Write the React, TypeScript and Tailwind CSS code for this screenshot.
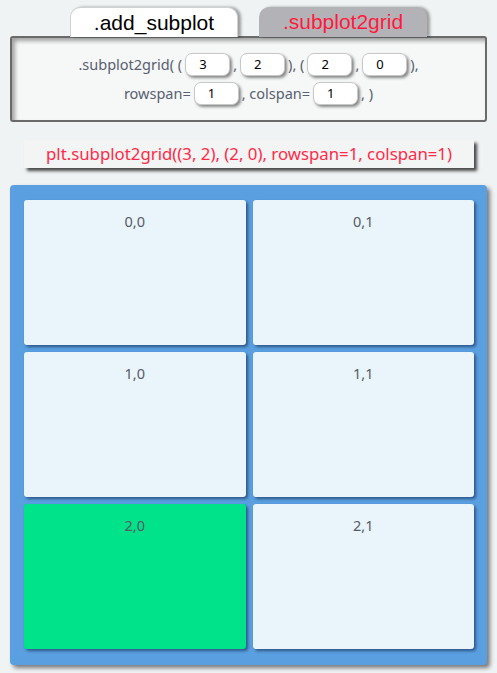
const CELLS = ["0,0", "0,1", "1,0", "1,1", "2,0", "2,1"];

function NumBox({ value }: { value: string }) {
  return (
    <span className="mx-[3px] inline-flex h-[23px] w-[45px] items-center rounded-[7px] border border-[#c8c8c8] bg-white pl-[13px] text-[13px] text-black shadow-[2px_2px_3px_rgba(0,0,0,0.45)]">
      {value}
    </span>
  );
}

export default function App() {
  return (
    <div
      className="min-h-[673px] w-[497px] bg-[#f0f3f4] pt-[7px]"
      style={{ fontFamily: '"Noto Sans", "Open Sans", sans-serif' }}
    >
      <div className="flex justify-center gap-[21px]">
        <div
          className="flex h-[30px] w-[168px] items-center justify-center rounded-t-[10px] border border-b-0 border-[#d0d0d0] bg-white text-[21px] text-black shadow-[3px_0_3px_rgba(0,0,0,0.35)]"
          style={{ fontFamily: '"Liberation Sans", Arial, sans-serif' }}
        >
          .add_subplot
        </div>
        <div
          className="flex h-[30px] w-[168px] items-center justify-center rounded-t-[10px] bg-[#b3b3b7] text-[21px] text-[#ff1a3d] shadow-[3px_0_3px_rgba(0,0,0,0.35)]"
          style={{ fontFamily: '"Liberation Sans", Arial, sans-serif' }}
        >
          .subplot2grid
        </div>
      </div>

      <div className="mx-[10px] -mt-px flex h-[86px] flex-col items-center justify-center gap-[6px] rounded-[3px] border-2 border-[#6a6a6a] bg-[#f6f7f7] text-[14.5px] text-[#566170] shadow-[inset_3px_3px_4px_rgba(0,0,0,0.35)]">
        <div className="flex items-center">
          <span>.subplot2grid( (</span>
          <NumBox value="3" />
          <span>,</span>
          <NumBox value="2" />
          <span>), (</span>
          <NumBox value="2" />
          <span>,</span>
          <NumBox value="0" />
          <span>),</span>
        </div>
        <div className="flex items-center">
          <span>rowspan=</span>
          <NumBox value="1" />
          <span>, colspan=</span>
          <NumBox value="1" />
          <span>, )</span>
        </div>
      </div>

      <div className="mx-[24px] mt-[18px] flex h-[28px] w-[450px] items-center justify-center bg-[#f3f4f4] text-[16.8px] text-[#ff2a48] shadow-[3px_3px_3px_rgba(0,0,0,0.7)]">
        plt.subplot2grid((3, 2), (2, 0), rowspan=1, colspan=1)
      </div>

      <div className="mx-[10px] mt-[17px] grid h-[480px] grid-cols-2 grid-rows-3 gap-[7px] rounded-[4px] bg-[#5a9fe0] pb-[16px] pl-[14px] pr-[13px] pt-[15px] shadow-[3px_3px_4px_rgba(0,0,0,0.5)]">
        {CELLS.map((c) => (
          <div
            key={c}
            className={`flex justify-center rounded-[3px] pt-[11px] text-[14.5px] text-[#555b62] shadow-[2px_2px_3px_rgba(20,40,80,0.6)] ${
              c === "2,0" ? "bg-[#00e38a]" : "bg-[#eaf4fb]"
            }`}
          >
            {c}
          </div>
        ))}
      </div>
    </div>
  );
}
